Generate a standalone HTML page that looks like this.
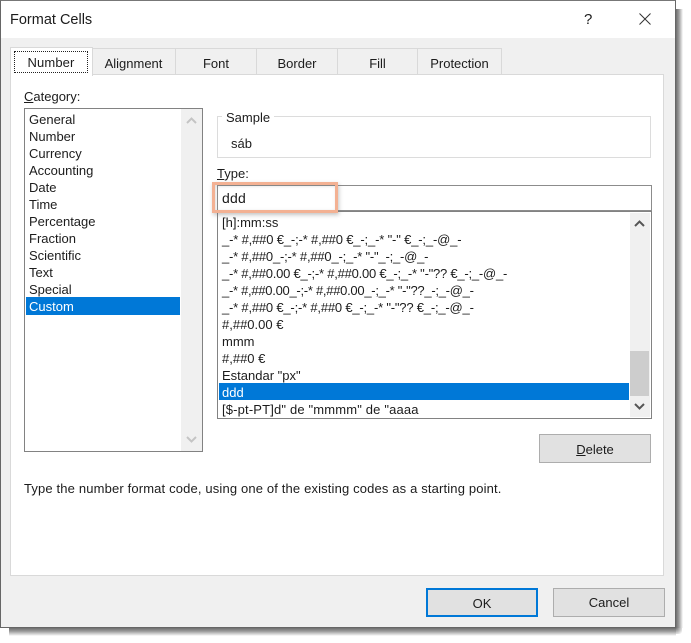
<!DOCTYPE html>
<html><head><meta charset="utf-8">
<style>
html,body{margin:0;padding:0;background:#fff;}
body{width:691px;height:643px;position:relative;overflow:hidden;font-family:"Liberation Sans",sans-serif;font-size:13px;color:#1c1c1c;}
div{position:absolute;box-sizing:border-box;white-space:nowrap;}
.t{line-height:17px;height:17px;}
.b{background:#e1e1e1;border:1px solid #adadad;text-align:center;line-height:27px;height:29px;width:112px;top:588px;}
.tab{top:48px;height:26px;background:#f0f0f0;border-top:1px solid #d9d9d9;border-right:1px solid #d9d9d9;text-align:center;line-height:29px;}
u{text-decoration:underline;}
svg{position:absolute;}
</style></head>
<body>
<div style="left:676px;top:9px;width:7px;height:619px;background:linear-gradient(to right,#6e6e6e,#9a9a9a 40%,#dcdcdc 80%,#fff);"></div>
<div style="left:9px;top:628px;width:667px;height:8px;background:linear-gradient(to bottom,#6e6e6e,#9a9a9a 40%,#dcdcdc 80%,#fff);"></div>
<div style="left:676px;top:628px;width:6px;height:6px;background:radial-gradient(circle at 0 0,#777,#fff 90%);"></div>
<div style="left:0;top:0;width:676px;height:628px;background:#f0f0f0;border:1px solid #666;border-top-color:#777;"></div>
<div style="left:1px;top:1px;width:674px;height:37px;background:#fff;"></div>
<div style="left:10px;top:11px;font-size:14.5px;line-height:18px;">Format Cells</div>
<div style="left:584px;top:11px;font-size:15px;line-height:18px;">?</div>
<svg style="left:638px;top:12px" width="14" height="14" viewBox="0 0 14 14"><path d="M1.5 1.5L12.5 12.5M12.5 1.5L1.5 12.5" stroke="#333" stroke-width="1" fill="none"/></svg>

<!-- panel -->
<div style="left:10px;top:74px;width:654px;height:502px;background:#fff;border:1px solid #d9d9d9;"></div>
<div class="tab" style="left:92px;width:84px;">Alignment</div>
<div class="tab" style="left:176px;width:81px;">Font</div>
<div class="tab" style="left:257px;width:81px;">Border</div>
<div class="tab" style="left:338px;width:80px;">Fill</div>
<div class="tab" style="left:418px;width:84px;">Protection</div>
<div style="left:10px;top:47px;width:83px;height:29px;background:#fff;border:1px solid #d9d9d9;border-bottom:none;"></div>
<div style="left:14px;top:51px;width:74px;height:22px;border:1px dotted #222;text-align:center;line-height:22px;letter-spacing:.12px;">Number</div>

<!-- category -->
<div style="left:24px;top:88px;line-height:17px;"><u>C</u>ategory:</div>
<div style="left:24px;top:108px;width:179px;height:344px;background:#fff;border:1px solid #828282;"></div>
<div style="left:181px;top:109px;width:21px;height:342px;background:#f0f0f0;"></div>
<svg style="left:185px;top:116px" width="13" height="9" viewBox="0 0 13 9"><path d="M2 7L6.5 2.5L11 7" stroke="#c4c4c4" stroke-width="2" fill="none"/></svg>
<svg style="left:185px;top:435px" width="13" height="9" viewBox="0 0 13 9"><path d="M2 2L6.5 6.5L11 2" stroke="#c4c4c4" stroke-width="2" fill="none"/></svg>
<div style="left:26px;top:297px;width:154px;height:18px;background:#0078d7;"></div>
<div class="t" style="left:29px;top:111px;">General</div>
<div class="t" style="left:29px;top:128px;">Number</div>
<div class="t" style="left:29px;top:145px;">Currency</div>
<div class="t" style="left:29px;top:162px;">Accounting</div>
<div class="t" style="left:29px;top:179px;">Date</div>
<div class="t" style="left:29px;top:196px;">Time</div>
<div class="t" style="left:29px;top:213px;">Percentage</div>
<div class="t" style="left:29px;top:230px;">Fraction</div>
<div class="t" style="left:29px;top:247px;">Scientific</div>
<div class="t" style="left:29px;top:264px;">Text</div>
<div class="t" style="left:29px;top:281px;">Special</div>
<div class="t" style="left:29px;top:298px;color:#fff;">Custom</div>

<!-- sample -->
<div style="left:217px;top:116px;width:434px;height:42px;border:1px solid #dcdcdc;"></div>
<div style="left:222px;top:109px;padding:0 4px;background:#fff;line-height:17px;">Sample</div>
<div style="left:231px;top:135px;line-height:17px;">sáb</div>

<!-- type -->
<div style="left:217px;top:165px;line-height:17px;"><u>T</u>ype:</div>
<div style="left:217px;top:185px;width:435px;height:26px;background:#fff;border:1px solid #8c8c8c;"></div>
<div style="left:222px;top:190px;line-height:17px;font-size:14px;letter-spacing:.2px;">ddd</div>

<!-- list -->
<div style="left:217px;top:211px;width:435px;height:208px;background:#fff;border:1px solid #828282;"></div>
<div style="left:630px;top:213px;width:20px;height:204px;background:#f0f0f0;"></div>
<div style="left:630px;top:351px;width:19px;height:45px;background:#cdcdcd;"></div>
<svg style="left:633px;top:219px" width="13" height="9" viewBox="0 0 13 9"><path d="M2 7L6.5 2.5L11 7" stroke="#555" stroke-width="2" fill="none"/></svg>
<svg style="left:633px;top:402px" width="13" height="9" viewBox="0 0 13 9"><path d="M2 2L6.5 6.5L11 2" stroke="#555" stroke-width="2" fill="none"/></svg>
<div style="left:219px;top:383px;width:410px;height:17px;background:#0078d7;"></div>
<div class="t" style="left:222px;top:214px;">[h]:mm:ss</div>
<div class="t" style="left:222px;top:231px;letter-spacing:-.16px;">_-* #,##0 €_-;-* #,##0 €_-;_-* "-" €_-;_-@_-</div>
<div class="t" style="left:222px;top:248px;letter-spacing:-.2px;">_-* #,##0_-;-* #,##0_-;_-* "-"_-;_-@_-</div>
<div class="t" style="left:222px;top:265px;letter-spacing:-.23px;">_-* #,##0.00 €_-;-* #,##0.00 €_-;_-* "-"?? €_-;_-@_-</div>
<div class="t" style="left:222px;top:282px;letter-spacing:-.28px;">_-* #,##0.00_-;-* #,##0.00_-;_-* "-"??_-;_-@_-</div>
<div class="t" style="left:222px;top:299px;letter-spacing:-.2px;">_-* #,##0 €_-;-* #,##0 €_-;_-* "-"?? €_-;_-@_-</div>
<div class="t" style="left:222px;top:316px;">#,##0.00 €</div>
<div class="t" style="left:222px;top:333px;">mmm</div>
<div class="t" style="left:222px;top:350px;">#,##0 €</div>
<div class="t" style="left:222px;top:367px;">Estandar "px"</div>
<div class="t" style="left:222px;top:384px;color:#fff;">ddd</div>
<div class="t" style="left:222px;top:401px;letter-spacing:.16px;">[$-pt-PT]d" de "mmmm" de "aaaa</div>

<!-- highlight -->
<div style="left:212px;top:182px;width:126px;height:31px;border:3px solid #f3b193;box-shadow:1px 2px 4px rgba(110,110,110,.4), inset 1px 1px 3px rgba(110,110,110,.25);"></div>

<div class="b" style="left:539px;top:434px;line-height:29px;"><u>D</u>elete</div>
<div style="left:24px;top:480px;line-height:17px;letter-spacing:.15px;">Type the number format code, using one of the existing codes as a starting point.</div>

<div class="b" style="left:426px;border:2px solid #0078d7;line-height:27px;">OK</div>
<div class="b" style="left:553px;">Cancel</div>
</body></html>
